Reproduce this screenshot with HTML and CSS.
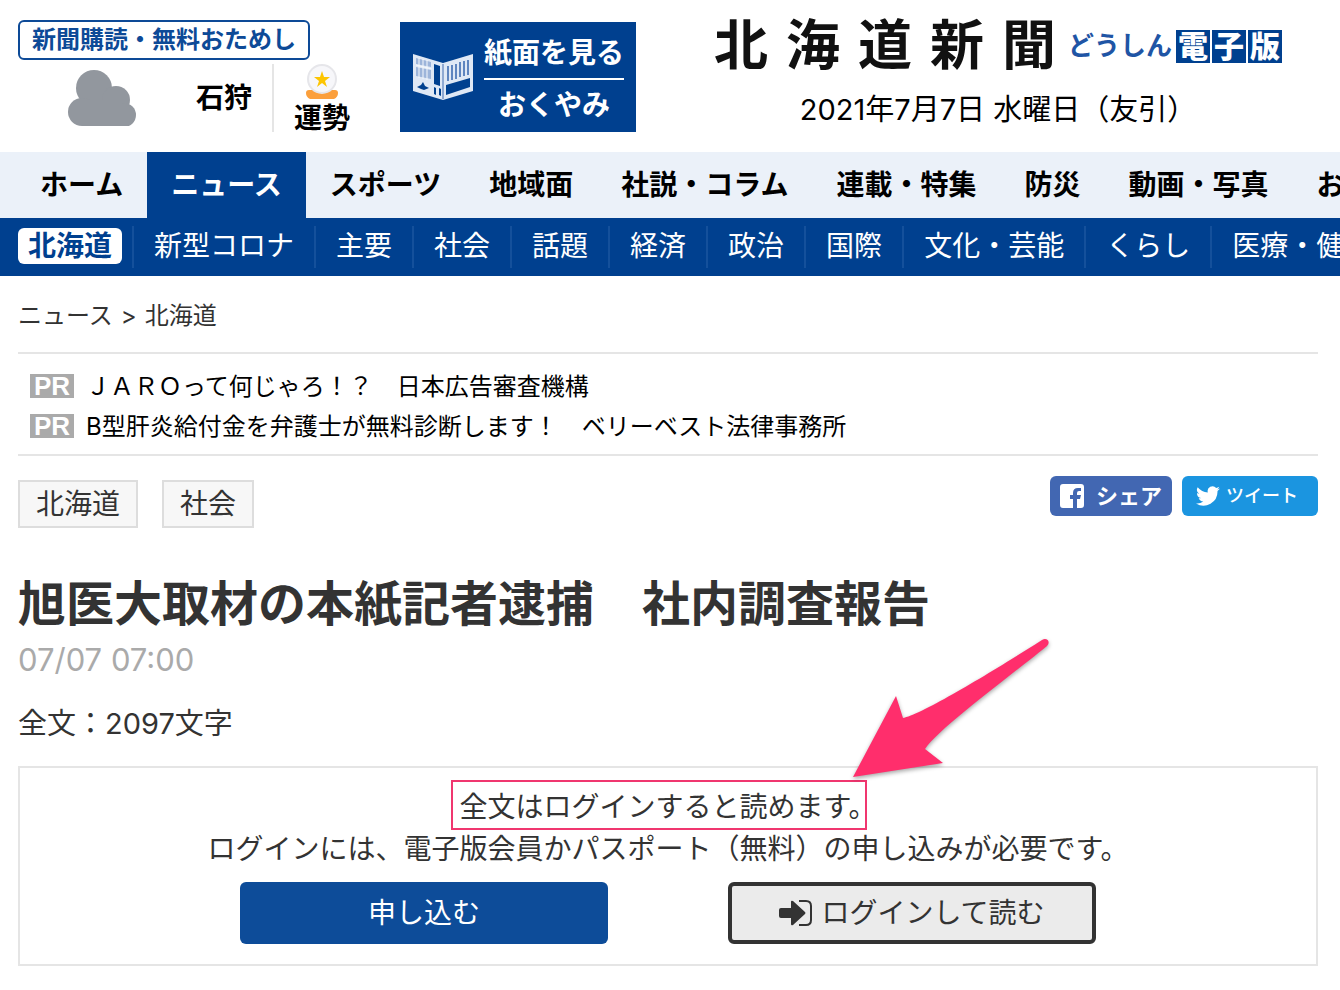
FILE: index.html
```html
<!DOCTYPE html>
<html lang="ja">

<head>
    <meta charset="UTF-8">
    <meta name="viewport" content="width=device-width, initial-scale=1.0">
    <title>北海道新聞 どうしん電子版</title>
    <link rel="stylesheet" href="styles.css">
</head>

<body>
    <!-- ヘッダー -->
    <header class="header">
        <div class="header-left">
            <a class="trial" href="#">新聞購読・無料おためし</a>
            <div class="info">
                <a class="weather" href="#">
                    <svg class="cloud" viewBox="0 0 68 56" width="68" height="56" aria-hidden="true">
                        <g fill="#92979e">
                            <circle cx="26" cy="18" r="18" />
                            <circle cx="48" cy="30" r="14" />
                            <circle cx="14" cy="42" r="14" />
                            <circle cx="56" cy="45" r="12" />
                            <path d="M14 56V30h34l8 4v22z" />
                        </g>
                    </svg>
                    <span>石狩</span>
                </a>
                <a class="fortune" href="#">
                    <svg viewBox="0 0 34 36" width="34" height="36" aria-hidden="true">
                        <path d="M1 29q0-3 3-3h26q3 0 3 3 0 4-4 6H5q-4-2-4-6z" fill="#fb9f3c" />
                        <circle cx="17" cy="15" r="14" fill="#f7f7fa" stroke="#e6e6ea" stroke-width="2" />
                        <path d="M17 7l2 6h6l-5 4 2 6-5-4-5 4 2-6-5-4h6z" fill="#fdc500" />
                    </svg>
                    <span>運勢</span>
                </a>
            </div>
        </div>
        <div class="paper">
            <svg viewBox="0 0 62 48" width="62" height="48" aria-hidden="true">
                <path d="M1 1l30 9L61 1v37l-30 9L1 38z" fill="#dfe8f5" />
                <path d="M31 11v35" stroke="#8fa9d2" stroke-width="2" />
                <path d="M4 5l15 4v5L4 11zM4 14l15 3v9L4 23z" fill="#9db5da" />
                <path d="M7 5v20M11 6v20M15 7v20M4 12l16 4" stroke="#f5f8fc" fill="none" />
                <path d="M22 11l6 2v20l-6-2zM34 32l24-7v9l-24 8zM22 34l2 1v7l-2-1zM27 35l2 1v7l-2-1z" fill="#00408f" />
                <path d="M36 13v15M40 12v15M44 11v15M48 9v15M52 8v15M56 7v15" stroke="#5f85bf" stroke-width="2" />
                <path d="M5 34l4-2 2-3 2 4 4 2-5 2-3-1z" fill="#00408f" />
            </svg>
            <div class="paper-links">
                <a href="#">紙面を見る</a>
                <a href="#">おくやみ</a>
            </div>
        </div>
        <div class="header-right">
            <a class="logo" href="#">
                <span class="logo-name"><span>北</span><span>海</span><span>道</span><span>新</span><span>聞</span></span>
                <span class="logo-sub">どうしん</span>
                <span class="logo-box"><b>電</b><b>子</b><b>版</b></span>
            </a>
            <p class="today">2021年7月7日 水曜日（友引）</p>
        </div>
    </header>

    <!-- ナビゲーション -->
    <nav>
        <ul class="nav">
            <li><a href="#">ホーム</a></li>
            <li><a class="active" href="#">ニュース</a></li>
            <li><a href="#">スポーツ</a></li>
            <li><a href="#">地域面</a></li>
            <li><a href="#">社説・コラム</a></li>
            <li><a href="#">連載・特集</a></li>
            <li><a href="#">防災</a></li>
            <li><a href="#">動画・写真</a></li>
            <li><a href="#">お悔やみ</a></li>
        </ul>
        <ul class="subnav">
            <li><a class="active" href="#">北海道</a></li>
            <li><a href="#">新型コロナ</a></li>
            <li><a href="#">主要</a></li>
            <li><a href="#">社会</a></li>
            <li><a href="#">話題</a></li>
            <li><a href="#">経済</a></li>
            <li><a href="#">政治</a></li>
            <li><a href="#">国際</a></li>
            <li><a href="#">文化・芸能</a></li>
            <li><a href="#">くらし</a></li>
            <li><a href="#">医療・健康</a></li>
        </ul>
    </nav>

    <main class="main">
        <div class="breadcrumb">
            <a href="#">ニュース</a>
            <span>&gt;</span>
            <a href="#">北海道</a>
        </div>

        <ul class="pr">
            <li><b>PR</b><a href="#">ＪＡＲＯって何じゃろ！？　日本広告審査機構</a></li>
            <li><b>PR</b><a href="#">B型肝炎給付金を弁護士が無料診断します！　ベリーベスト法律事務所</a></li>
        </ul>

        <div class="meta">
            <div class="tags">
                <a href="#">北海道</a>
                <a href="#">社会</a>
            </div>
            <div class="share">
                <a class="facebook" href="#">
                    <svg viewBox="0 0 24 24" width="24" height="24" aria-hidden="true">
                        <path fill="#fff" d="M3 0h18q3 0 3 3v18q0 3-3 3h-4v-9h3l1-4h-4V9q0-2 2-2h2V4h-3q-5 0-5 5v2h-3v4h3v9H3q-3 0-3-3V3q0-3 3-3z" />
                    </svg>
                    シェア
                </a>
                <a class="twitter" href="#">
                    <svg viewBox="0 0 24 24" width="24" height="24" aria-hidden="true">
                        <path fill="#fff" d="M24 4.6a10 10 0 0 1-2.8.8 5 5 0 0 0 2.1-2.7 10 10 0 0 1-3.1 1.2 4.9 4.9 0 0 0-8.4 4.5A14 14 0 0 1 1.7 3.2a4.9 4.9 0 0 0 1.5 6.5 5 5 0 0 1-2.2-.6 4.9 4.9 0 0 0 3.9 4.9 5 5 0 0 1-2.2.1 4.9 4.9 0 0 0 4.6 3.4A10 10 0 0 1 0 19.5a14 14 0 0 0 21.5-12.4A10 10 0 0 0 24 4.6z" />
                    </svg>
                    ツイート
                </a>
            </div>
        </div>

        <article>
            <h1>旭医大取材の本紙記者逮捕　社内調査報告</h1>
            <time class="date">07/07 07:00</time>
            <p class="count">全文：2097文字</p>

            <!-- ログイン案内 -->
            <div class="login">
                <p>
                    <span class="mark">全文はログインすると読めます。
                        <svg class="arrow" viewBox="0 0 208 152" width="208" height="152" aria-hidden="true">
                            <path fill="#ff2e6c" d="M6 143L49 62l7 22c18-3 92-48 139-78 5-3 9 2 5 6C166 40 92 94 78 115l18 14z" />
                        </svg>
                    </span>
                </p>
                <p>ログインには、電子版会員かパスポート（無料）の申し込みが必要です。</p>
                <div class="login-buttons">
                    <button class="apply" type="button">申し込む</button>
                    <button class="signin" type="button">
                        <svg viewBox="0 0 34 28" width="34" height="28" aria-hidden="true">
                            <path d="M2 9h10V3q0-2 2-1l12 11q1 1 0 2L14 26q-2 1-2-1v-6H2q-2 0-2-2v-6q0-2 2-2z" fill="#333" />
                            <path d="M20 2h7q5 0 5 5v14q0 5-5 5h-7" fill="none" stroke="#333" stroke-width="2" />
                        </svg>
                        ログインして読む
                    </button>
                </div>
            </div>
        </article>
    </main>
</body>

</html>
```
FILE: styles.css
```css
* {
    box-sizing: border-box;
}

body {
    margin: 0;
    background: #fff;
    color: #333;
    font-family: Inter, "Noto Sans CJK JP", sans-serif;
    font-size: 28px;
    line-height: 40px;
    overflow-x: hidden;
}

ul,
p,
h1 {
    margin: 0;
    padding: 0;
    list-style: none;
}

a {
    color: inherit;
    text-decoration: none;
}

svg {
    display: block;
    flex: none;
}

/* ヘッダー */
.header {
    display: flex;
    align-items: flex-start;
    padding: 20px 58px 20px 18px;
    color: #000;
    white-space: nowrap;
}

.header-left {
    width: 382px;
}

.trial {
    display: inline-block;
    padding: 0 12px;
    border: 2px solid #0d4a97;
    border-radius: 6px;
    color: #0d4a97;
    font-size: 24px;
    font-weight: 700;
    line-height: 36px;
    vertical-align: top;
}

.info {
    display: flex;
    margin-top: 4px;
    font-weight: 700;
}

.weather {
    display: flex;
    align-items: center;
    justify-content: space-between;
    width: 256px;
    height: 68px;
    padding: 0 20px 0 50px;
    border-right: 2px solid #e5e5e5;
}

.fortune {
    display: flex;
    flex-direction: column;
    align-items: center;
    height: 68px;
    padding-left: 20px;
    line-height: 36px;
}

.paper {
    display: flex;
    align-items: center;
    gap: 10px;
    height: 110px;
    margin-top: 2px;
    padding: 0 12px;
    background: #00408f;
    color: #fff;
    font-weight: 700;
    text-align: center;
}

.paper-links a {
    display: block;
    padding-top: 4px;
    line-height: 50px;
}

.paper-links a + a {
    padding-top: 0;
    border-top: 2px solid #fff;
}

.header-right {
    margin-left: auto;
    text-align: center;
}

.logo {
    display: flex;
    align-items: center;
    height: 52px;
    font-weight: 700;
}

.logo-name {
    display: flex;
    gap: 18px;
    margin-right: 12px;
    color: #111;
    font-size: 54px;
    font-weight: 700;
}

.logo-sub {
    margin-right: 4px;
    color: #1f55a5;
    font-size: 26px;
}

.logo-box {
    display: flex;
    gap: 2px;
    color: #fff;
    font-size: 30px;
    line-height: 33px;
}

.logo-box b {
    width: 34px;
    height: 33px;
    background: #00408f;
}

.today {
    margin-top: 18px;
    font-size: 29px;
}

/* ナビゲーション */
.nav,
.subnav {
    display: flex;
    overflow: hidden;
    white-space: nowrap;
}

.nav {
    padding-left: 16px;
    background: #ebf1f9;
    color: #000;
    font-weight: 700;
}

.nav a {
    display: block;
    padding: 0 24px;
    line-height: 66px;
}

.nav .active {
    background: #00408f;
    color: #fff;
}

.subnav {
    padding: 8px;
    background: #00408f;
    color: #fff;
}

.subnav li {
    flex: none;
    height: 42px;
    padding: 0 20px;
    border-left: 2px solid #14509b;
}

.subnav li:first-child {
    padding: 0 10px;
    border-left: none;
}

.subnav .active {
    display: block;
    margin-top: 2px;
    padding: 0 10px;
    border-radius: 6px;
    background: #fff;
    color: #00408f;
    font-weight: 700;
    line-height: 36px;
}

/* 本文 */
.main {
    padding: 20px 22px 24px 18px;
}

.breadcrumb {
    display: flex;
    gap: 8px;
    font-size: 24px;
}

.pr {
    margin-top: 16px;
    padding: 12px 12px 8px;
    border-top: 2px solid #e5e5e5;
    border-bottom: 2px solid #e5e5e5;
    color: #000;
    font-size: 24px;
}

.pr li {
    display: flex;
    align-items: center;
    gap: 12px;
}

.pr a {
    line-height: 38px;
    padding-top: 2px;
}

.pr b {
    width: 44px;
    background: #aaa;
    color: #fff;
    font-family: "Liberation Sans", sans-serif;
    font-size: 26px;
    line-height: 24px;
    text-align: center;
}

.meta {
    display: flex;
    justify-content: space-between;
    margin-top: 20px;
}

.tags {
    display: flex;
    gap: 24px;
    margin-top: 4px;
}

.tags a {
    padding: 0 16px;
    border: 2px solid #ddd;
    background: #f7f7f7;
    line-height: 44px;
}

.share {
    display: flex;
    gap: 10px;
    color: #fff;
}

.share a {
    display: flex;
    align-items: center;
    height: 40px;
    border-radius: 6px;
}

.facebook {
    gap: 12px;
    width: 122px;
    padding-left: 10px;
    background: #4267b2;
    font-size: 22px;
    font-weight: 700;
}

.twitter {
    gap: 6px;
    width: 136px;
    padding-left: 14px;
    background: #1b95e0;
    font-size: 18px;
    font-weight: 500;
}

h1 {
    margin-top: 44px;
    font-size: 48px;
    line-height: 64px;
}

.date {
    display: block;
    margin-top: 4px;
    color: #aaa;
    font-size: 31px;
}

.count {
    margin-top: 24px;
    font-size: 29px;
}

.login {
    margin-top: 22px;
    padding: 18px 0 20px;
    border: 2px solid #e5e5e5;
    text-align: center;
}

.login p {
    line-height: 42px;
}

.mark {
    display: inline-block;
    position: relative;
}

/* 強調の枠と矢印 */
.mark::before {
    content: "";
    position: absolute;
    top: -6px;
    right: 10px;
    bottom: -2px;
    left: -8px;
    border: 2px solid #f0366f;
}

.arrow {
    position: absolute;
    top: -152px;
    right: -178px;
    filter: drop-shadow(0 2px 2px rgba(0, 0, 0, 0.35));
}

.login-buttons {
    display: flex;
    justify-content: center;
    gap: 120px;
    margin-top: 12px;
}

.login-buttons button {
    display: flex;
    align-items: center;
    justify-content: center;
    gap: 8px;
    width: 368px;
    height: 62px;
    border: none;
    border-radius: 6px;
    font: inherit;
    cursor: pointer;
}

.login-buttons .apply {
    background: #0d4c99;
    color: #fff;
}

.login-buttons .signin {
    border: 4px solid #333;
    background: #ebebeb;
    color: #333;
}
```
